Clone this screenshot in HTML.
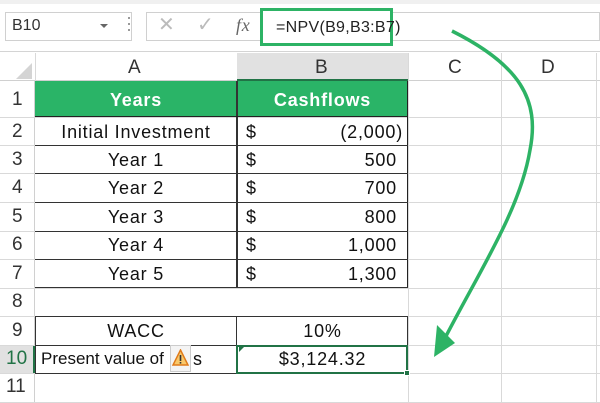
<!DOCTYPE html>
<html><head><style>
*{margin:0;padding:0;box-sizing:border-box}
body{width:600px;height:403px;overflow:hidden;background:#fff;font-family:"Liberation Sans",Arial,sans-serif;position:relative}
.a{position:absolute}
.t{position:absolute;font-size:18px;letter-spacing:0.8px;color:#111;line-height:20px;white-space:nowrap}
.hl{position:absolute;height:1px;background:#d9d9d9}
.vl{position:absolute;width:1px;background:#d9d9d9}
</style></head><body>
<div class="a" style="left:0;top:0;width:600px;height:52px;background:#fff;border-bottom:1px solid #d4d4d4"></div>
<div class="a" style="left:0;top:0;width:600px;height:4px;background:#f0f0f0"></div>
<div class="a" style="left:5px;top:12px;width:127px;height:29px;border:1px solid #d0d0d0"></div>
<div class="t" style="left:12px;top:16px;font-size:16px;letter-spacing:0;color:#333">B10</div>
<div class="a" style="left:100px;top:24px;width:0;height:0;border-left:4px solid transparent;border-right:4px solid transparent;border-top:4px solid #666"></div>
<div class="a" style="left:128px;top:17px;width:2px;height:2px;background:#999;box-shadow:0 6px #999,0 12px #999"></div>
<div class="a" style="left:146px;top:12px;width:454px;height:29px;border:1px solid #d0d0d0"></div>
<div class="t" style="left:158px;top:15px;font-size:20px;color:#bbb">✕</div>
<div class="t" style="left:197px;top:15px;font-size:20px;color:#bbb">✓</div>
<div class="t" style="left:236px;top:15px;font-size:18px;color:#666;font-family:'Liberation Serif',serif;font-style:italic">fx</div>
<div class="a" style="left:260px;top:8px;width:133px;height:38px;border:3px solid #2db365;background:#fff"></div>
<div class="t" style="left:276px;top:18px;font-size:16px;letter-spacing:0.3px;color:#222">=NPV(B9,B3:B7)</div>
<div class="a" style="left:0;top:53px;width:600px;height:28px;background:#fff;border-bottom:1px solid #d0d0d0"></div>
<div class="a" style="left:237px;top:53px;width:171px;height:28px;background:#e1e1e1;border-bottom:2px solid #217346"></div>
<div class="a" style="left:16px;top:63px;width:0;height:0;border-left:16px solid transparent;border-bottom:16px solid #d4d4d4"></div>
<div class="a" style="left:0;top:81px;width:35px;height:322px;background:#fff;border-right:1px solid #d0d0d0"></div>
<div class="a" style="left:0;top:345px;width:35px;height:28px;background:#e1e1e1;border-right:2px solid #217346"></div>
<div class="vl" style="left:35px;top:53px;height:28px"></div>
<div class="vl" style="left:408px;top:53px;height:350px"></div>
<div class="vl" style="left:501px;top:53px;height:350px"></div>
<div class="vl" style="left:596px;top:53px;height:350px"></div>
<div class="t" style="left:128px;top:58px;font-size:19px;color:#333">A</div>
<div class="t" style="left:315px;top:58px;font-size:19px;color:#333">B</div>
<div class="t" style="left:448px;top:58px;font-size:19px;color:#333">C</div>
<div class="t" style="left:541px;top:58px;font-size:19px;color:#333">D</div>
<div class="hl" style="left:0;top:117px;width:600px"></div>
<div class="hl" style="left:0;top:145px;width:600px"></div>
<div class="hl" style="left:0;top:173px;width:600px"></div>
<div class="hl" style="left:0;top:202px;width:600px"></div>
<div class="hl" style="left:0;top:231px;width:600px"></div>
<div class="hl" style="left:0;top:259px;width:600px"></div>
<div class="hl" style="left:0;top:288px;width:600px"></div>
<div class="hl" style="left:0;top:316px;width:600px"></div>
<div class="hl" style="left:0;top:345px;width:600px"></div>
<div class="hl" style="left:0;top:373px;width:600px"></div>
<div class="hl" style="left:0;top:402px;width:600px"></div>
<div class="a" style="left:35px;top:81px;width:373px;height:36px;background:#2ab467"></div>
<div class="a" style="left:236px;top:81px;width:2px;height:207px;background:#333"></div>
<div class="a" style="left:35px;top:116px;width:373px;height:1px;background:#222"></div>
<div class="a" style="left:407px;top:81px;width:1px;height:207px;background:#222"></div>
<div class="a" style="left:35px;top:145px;width:373px;height:1px;background:#333"></div>
<div class="a" style="left:35px;top:173px;width:373px;height:1px;background:#333"></div>
<div class="a" style="left:35px;top:202px;width:373px;height:1px;background:#333"></div>
<div class="a" style="left:35px;top:231px;width:373px;height:1px;background:#333"></div>
<div class="a" style="left:35px;top:259px;width:373px;height:1px;background:#333"></div>
<div class="a" style="left:35px;top:287px;width:373px;height:1px;background:#333"></div>
<div class="a" style="left:35px;top:316px;width:373px;height:58px;border:1px solid #333"></div>
<div class="a" style="left:236px;top:316px;width:1px;height:29px;background:#333"></div>
<div class="a" style="left:35px;top:345px;width:202px;height:1px;background:#333"></div>
<div class="a" style="left:236px;top:345px;width:172px;height:29px;border:2px solid #217346"></div>
<div class="a" style="left:404px;top:370px;width:6px;height:6px;background:#217346;border:1px solid #fff"></div>
<div class="a" style="left:239px;top:347px;width:0;height:0;border-right:5px solid transparent;border-top:5px solid #217346"></div>
<div class="t" style="left:12px;top:90px;font-size:19px;letter-spacing:0;color:#333">1</div>
<div class="t" style="left:12px;top:122px;font-size:19px;letter-spacing:0;color:#333">2</div>
<div class="t" style="left:12px;top:150px;font-size:19px;letter-spacing:0;color:#333">3</div>
<div class="t" style="left:12px;top:178px;font-size:19px;letter-spacing:0;color:#333">4</div>
<div class="t" style="left:12px;top:207px;font-size:19px;letter-spacing:0;color:#333">5</div>
<div class="t" style="left:12px;top:235px;font-size:19px;letter-spacing:0;color:#333">6</div>
<div class="t" style="left:12px;top:264px;font-size:19px;letter-spacing:0;color:#333">7</div>
<div class="t" style="left:12px;top:292px;font-size:19px;letter-spacing:0;color:#333">8</div>
<div class="t" style="left:12px;top:321px;font-size:19px;letter-spacing:0;color:#333">9</div>
<div class="t" style="left:6px;top:349px;font-size:19px;letter-spacing:0;color:#217346">10</div>
<div class="t" style="left:6px;top:377px;font-size:19px;letter-spacing:0;color:#333">11</div>
<div class="t" style="left:35px;width:202px;text-align:center;top:90px;color:#fff;font-weight:bold">Years</div>
<div class="t" style="left:237px;width:171px;text-align:center;top:90px;color:#fff;font-weight:bold">Cashflows</div>
<div class="t" style="left:35px;width:202px;text-align:center;top:122px">Initial Investment</div>
<div class="t" style="left:35px;width:202px;text-align:center;top:150px">Year 1</div>
<div class="t" style="left:35px;width:202px;text-align:center;top:178px">Year 2</div>
<div class="t" style="left:35px;width:202px;text-align:center;top:207px">Year 3</div>
<div class="t" style="left:35px;width:202px;text-align:center;top:235px">Year 4</div>
<div class="t" style="left:35px;width:202px;text-align:center;top:264px">Year 5</div>
<div class="t" style="left:35px;width:202px;text-align:center;top:321px">WACC</div>
<div class="t" style="left:41px;top:349px;font-size:17px;letter-spacing:0">Present value of</div>
<div class="a" style="left:170px;top:345px;width:21px;height:27px;background:#f4f4f4;border:1px solid #ccc"></div>
<svg class="a" style="left:172px;top:349px" width="17" height="18"><path d="M8.5 1 L16 16 L1 16 Z" fill="#f9c86a" stroke="#e07b1a" stroke-width="1.5"/><rect x="7.7" y="6" width="1.6" height="6" fill="#333"/><rect x="7.7" y="13" width="1.6" height="1.6" fill="#333"/></svg>
<div class="t" style="left:193px;top:349px">s</div>
<div class="t" style="left:246px;top:122px">$</div><div class="t" style="left:237px;width:166px;text-align:right;top:122px">(2,000)</div>
<div class="t" style="left:246px;top:150px">$</div><div class="t" style="left:237px;width:160px;text-align:right;top:150px">500</div>
<div class="t" style="left:246px;top:178px">$</div><div class="t" style="left:237px;width:160px;text-align:right;top:178px">700</div>
<div class="t" style="left:246px;top:207px">$</div><div class="t" style="left:237px;width:160px;text-align:right;top:207px">800</div>
<div class="t" style="left:246px;top:235px">$</div><div class="t" style="left:237px;width:160px;text-align:right;top:235px">1,000</div>
<div class="t" style="left:246px;top:264px">$</div><div class="t" style="left:237px;width:160px;text-align:right;top:264px">1,300</div>
<div class="t" style="left:237px;width:171px;text-align:center;top:321px">10%</div>
<div class="t" style="left:237px;width:171px;text-align:center;top:349px">$3,124.32</div>
<svg class="a" style="left:0;top:0" width="600" height="403">
<path d="M452 31 C 520 65, 540 100, 530 150 C 520 210, 480 270, 444 340" fill="none" stroke="#2db365" stroke-width="3.5"/>
<path d="M434 357 L437 325 L455 343 Z" fill="#2db365"/>
</svg>
</body></html>
